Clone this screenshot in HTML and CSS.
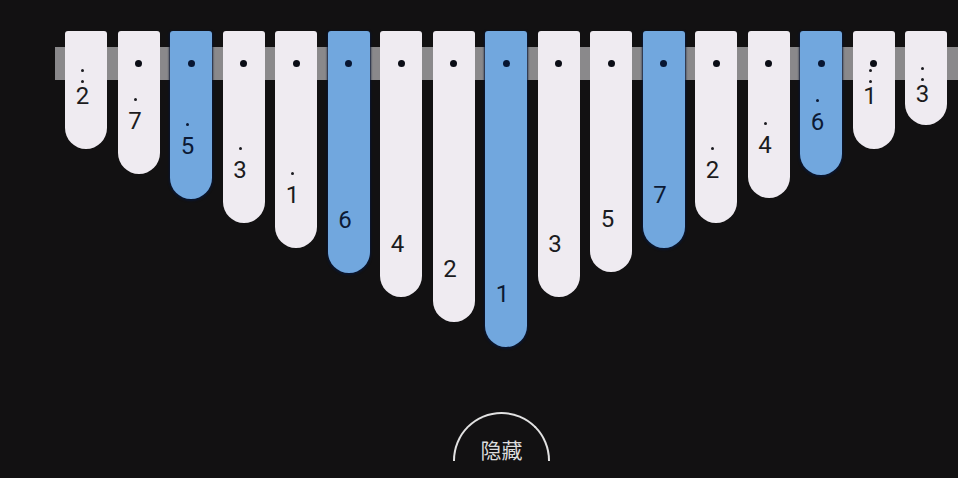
FILE: index.html
```html
<!DOCTYPE html>
<html lang="zh-CN">
<head>
<meta charset="utf-8">
<title>Kalimba</title>
<link rel="stylesheet" href="styles.css">
</head>
<body>
<main class="app">
  <section class="board">
    <div class="keys">
      <div class="key" style="height:118px"><span class="pin none"></span><div class="label"><span class="dots"><i></i><i></i></span><span class="num">2</span></div></div>
      <div class="key" style="height:143px"><span class="pin"></span><div class="label"><span class="dots one"><i></i></span><span class="num">7</span></div></div>
      <div class="key blue" style="height:168px"><span class="pin"></span><div class="label"><span class="dots one"><i></i></span><span class="num">5</span></div></div>
      <div class="key" style="height:192px"><span class="pin"></span><div class="label"><span class="dots one"><i></i></span><span class="num">3</span></div></div>
      <div class="key" style="height:217px"><span class="pin"></span><div class="label"><span class="dots one"><i></i></span><span class="num">1</span></div></div>
      <div class="key blue" style="height:242px"><span class="pin"></span><div class="label"><span class="num">6</span></div></div>
      <div class="key" style="height:266px"><span class="pin"></span><div class="label"><span class="num">4</span></div></div>
      <div class="key" style="height:291px"><span class="pin"></span><div class="label"><span class="num">2</span></div></div>
      <div class="key blue" style="height:316px"><span class="pin"></span><div class="label"><span class="num">1</span></div></div>
      <div class="key" style="height:266px"><span class="pin"></span><div class="label"><span class="num">3</span></div></div>
      <div class="key" style="height:241px"><span class="pin"></span><div class="label"><span class="num">5</span></div></div>
      <div class="key blue" style="height:217px"><span class="pin"></span><div class="label"><span class="num">7</span></div></div>
      <div class="key" style="height:192px"><span class="pin"></span><div class="label"><span class="dots one"><i></i></span><span class="num">2</span></div></div>
      <div class="key" style="height:167px"><span class="pin"></span><div class="label"><span class="dots one"><i></i></span><span class="num">4</span></div></div>
      <div class="key blue" style="height:144px"><span class="pin"></span><div class="label"><span class="dots one"><i></i></span><span class="num">6</span></div></div>
      <div class="key" style="height:118px"><span class="pin"></span><div class="label"><span class="dots"><i></i><i></i></span><span class="num">1</span></div></div>
      <div class="key" style="height:94px"><span class="pin none"></span><div class="label"><span class="dots"><i></i><i></i></span><span class="num">3</span></div></div>
    </div>
  </section>
  <footer class="footer">
    <button class="hide-btn" type="button">隐藏</button>
  </footer>
</main>
</body>
</html>
```

FILE: styles.css
```css
* { box-sizing: border-box; }

html, body {
  margin: 0;
  padding: 0;
  background: #121112;
  width: 958px;
  height: 478px;
  overflow: hidden;
}

body {
  font-family: Roboto, "Noto Sans", "Noto Sans CJK SC", sans-serif;
}

.app {
  display: flex;
  flex-direction: column;
}

.board {
  margin-left: 55px;
  padding-top: 31px;
  padding-left: 10px;
  background: linear-gradient(#8a898b, #8a898b) no-repeat 0 47px / 100% 33px;
}

.keys {
  display: flex;
  align-items: flex-start;
  gap: 10.5px;
}

.key {
  width: 42px;
  flex: none;
  display: flex;
  flex-direction: column;
  align-items: center;
  background: #efebf1;
  border-radius: 3px 3px 21px 21px;
  color: #1b1b20;
}

.key.blue {
  background: #71a7de;
  color: #0c1a34;
  box-shadow: 0 1px 2px 1px rgba(8, 22, 52, 0.9);
}

.pin {
  width: 7px;
  height: 7px;
  border-radius: 50%;
  background: #0b0d16;
  margin-top: 29px;
  flex: none;
}

.key.blue .pin { background: #081632; }

.pin.none { visibility: hidden; }

.label {
  margin-top: auto;
  margin-right: 7px;
  padding-bottom: 41px;
  display: flex;
  flex-direction: column;
  align-items: center;
}

.dots {
  display: flex;
  flex-direction: column;
  align-items: center;
  gap: 8px;
  margin-bottom: 1px;
}

.dots.one { margin-bottom: 8px; }

.dots i {
  display: block;
  width: 3px;
  height: 3px;
  border-radius: 50%;
  background: currentColor;
}

.num {
  display: block;
  font-size: 24px;
  line-height: 24px;
  font-weight: 400;
}

.footer {
  display: flex;
  justify-content: center;
  padding-left: 45px;
  margin-top: 65px;
}

.hide-btn {
  width: 97px;
  height: 49px;
  border: 2px solid #e2e2e2;
  border-bottom: none;
  border-radius: 50px 50px 0 0;
  background: transparent;
  color: #dcdcdc;
  font-family: "Noto Sans CJK SC", "Noto Sans", sans-serif;
  font-size: 21px;
  line-height: 21px;
  padding: 25px 0 0 0;
  display: flex;
  justify-content: center;
  align-items: flex-start;
}
```
